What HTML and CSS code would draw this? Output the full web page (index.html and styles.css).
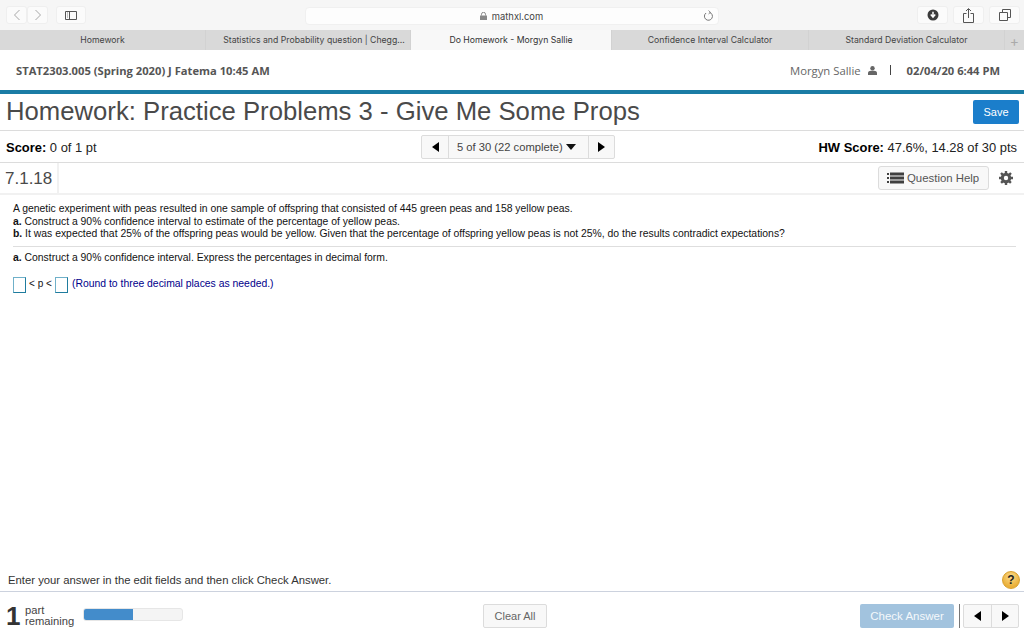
FILE: index.html
```html
<!DOCTYPE html>
<html lang="en">
<head>
<meta charset="utf-8">
<title>Do Homework - Morgyn Sallie</title>
<link rel="stylesheet" href="styles.css">
</head>
<body>
<div class="page">
  <div class="toolbar">
    <div class="tb-left">
      <div class="tb-group">
        <span class="tb-btn tb-nav"><svg width="8" height="12" viewBox="0 0 8 12"><path d="M6.500 1 1.500 6l5 5" fill="none" stroke="#a8a8a8"/></svg></span>
        <span class="tb-btn tb-nav"><svg width="8" height="12" viewBox="0 0 8 12"><path d="M1.500 1l5 5-5 5" fill="none" stroke="#a8a8a8"/></svg></span>
      </div>
      <span class="tb-btn tb-side"><svg width="12" height="9" viewBox="0 0 12 9"><path d="M.5.5h11v8H.5z" fill="none" stroke="#555"/><path d="M4.500.5v8" stroke="#555"/><path d="M2 2h1M2 4h1M2 6h1" stroke="#888"/></svg></span>
    </div>
    <div class="address">
      <span class="addr-spacer"></span>
      <span class="addr-text"><svg width="7" height="8" viewBox="0 0 7 8"><path d="M1.500 3.500V2.300a2 2 0 0 1 4 0v1.200" fill="none" stroke="#888"/><path d="M0 3.500h7V8H0z" fill="#888"/></svg>mathxl.com</span>
      <svg class="reload" width="11" height="12" viewBox="0 0 11 12"><path d="M6.500 2.400a4 4 0 1 1-3.400.6" fill="none" stroke="#777"/><path d="M5.500.5 7.500 2.400 5.500 4" fill="none" stroke="#777" stroke-width=".8"/></svg>
    </div>
    <div class="tb-right">
      <span class="tb-btn tb-action"><svg width="12" height="12" viewBox="0 0 12 12"><circle cx="6" cy="6" r="5.500" fill="#3c3c3c"/><path d="M6 2.800v4M3.800 5.600 6 8.200l2.200-2.600" fill="none" stroke="#fff" stroke-width="1.500"/></svg></span>
      <span class="tb-btn tb-action"><svg width="11" height="15" viewBox="0 0 11 15"><path d="M3.500 5.500H.5v9h10v-9h-3M5.500 10V1M3 3l2.500-2.500L8 3" fill="none" stroke="#555"/></svg></span>
      <span class="tb-btn tb-action"><svg width="12" height="12" viewBox="0 0 12 12"><path d="M.5 3.500h8v8h-8zM3.500 3.500v-3h8v8h-3" fill="none" stroke="#555"/></svg></span>
    </div>
  </div>
  <div class="tabs">
    <div class="tab t1">Homework</div>
    <div class="tab t2">Statistics and Probability question | Chegg...</div>
    <div class="tab t3 active">Do Homework - Morgyn Sallie</div>
    <div class="tab t4">Confidence Interval Calculator</div>
    <div class="tab t5">Standard Deviation Calculator</div>
    <div class="tab t6">+</div>
  </div>
  <header class="site-head">
    <div class="course">STAT2303.005 (Spring 2020) J Fatema 10:45 AM</div>
    <div class="user">
      <span class="user-name">Morgyn Sallie</span>
      <svg class="user-icon" width="9" height="9" viewBox="0 0 9 9"><circle cx="4.500" cy="2.300" r="2.200" fill="#666"/><path d="M0 9V6.800C0 5.500 1.500 5 3 4.800h3C7.500 5 9 5.500 9 6.800V9z" fill="#666"/></svg>
      <span class="user-sep"></span>
      <span class="user-date">02/04/20 6:44 PM</span>
    </div>
  </header>
  <div class="title-row">
    <h1 class="title">Homework: Practice Problems 3 - Give Me Some Props</h1>
    <button class="save">Save</button>
  </div>
  <div class="score-row">
    <div class="score"><b>Score:</b> 0 of 1 pt</div>
    <div class="pager">
      <span class="pg-btn"><i class="tri-l"></i></span>
      <span class="pg-mid">5 of 30 (22 complete)<i class="tri-d"></i></span>
      <span class="pg-btn"><i class="tri-r"></i></span>
    </div>
    <div class="hw"><b>HW Score:</b> 47.6%, 14.28 of 30 pts</div>
  </div>
  <div class="q-row">
    <div class="q-num">7.1.18</div>
    <div class="q-tools">
      <button class="help"><svg width="17" height="12" viewBox="0 0 17 12"><path d="M0 1h2v2H0zM0 5h2v2H0zM0 9h2v2H0zM3 .5h14v3H3zM3 4.500h14v3H3zM3 8.500h14v3H3z" fill="#3f3f3f"/></svg>Question Help</button>
      <svg class="gear" width="14" height="14" viewBox="0 0 14 14"><circle cx="7" cy="7" r="3.700" fill="none" stroke="#555" stroke-width="3"/><path d="M7 0v14M0 7h14M2 2l10 10M12 2 2 12" stroke="#555" stroke-width="2.400" stroke-dasharray="2.600 8.800 2.600"/></svg>
    </div>
  </div>
  <main class="question">
    <div class="stem">
      <p>A genetic experiment with peas resulted in one sample of offspring that consisted of 445 green peas and 158 yellow peas.</p>
      <p><b>a.</b> Construct a 90% confidence interval to estimate of the percentage of yellow peas.</p>
      <p><b>b.</b> It was expected that 25% of the offspring peas would be yellow. Given that the percentage of offspring yellow peas is not 25%, do the results contradict expectations?</p>
    </div>
    <p class="part"><b>a.</b> Construct a 90% confidence interval. Express the percentages in decimal form.</p>
    <div class="answer">
      <span class="field"></span><span class="lt">&lt; p &lt;</span><span class="field"></span><span class="hint">(Round to three decimal places as needed.)</span>
    </div>
  </main>
  <div class="instr">
    <span>Enter your answer in the edit fields and then click Check Answer.</span>
    <span class="qmark">?</span>
  </div>
  <footer class="foot">
    <div class="parts">
      <span class="big">1</span>
      <span class="part-txt">part<br>remaining</span>
      <span class="bar"><span class="bar-fill"></span></span>
    </div>
    <button class="clear">Clear All</button>
    <div class="foot-right">
      <button class="check">Check Answer</button>
      <span class="foot-sep"></span>
      <div class="pager small">
        <span class="pg-btn"><i class="tri-l"></i></span>
        <span class="pg-btn"><i class="tri-r"></i></span>
      </div>
    </div>
  </footer>
</div>
</body>
</html>
```
FILE: styles.css
```css
* { box-sizing: border-box; }
html, body { margin: 0; padding: 0; }
body { font-family: "Liberation Sans", Arial, sans-serif; background: #fff; color: #000; }
.page { width: 1024px; height: 640px; display: flex; flex-direction: column; overflow: hidden; }
p { margin: 0; }
button { font-family: inherit; cursor: default; }

.toolbar { height: 30px; background: #f6f6f6; display: flex; align-items: flex-start; padding-top: 6px; flex: none; }
.tb-left { width: 305px; display: flex; gap: 8px; padding-left: 6px; }
.tb-group { display: flex; }
.tb-btn { display: flex; align-items: center; justify-content: center; height: 18px; background: #fbfbfb; border: 1px solid #efefef; border-radius: 3px; }
.tb-nav { width: 21px; }
.tb-side { width: 30px; }
.address { width: 414px; height: 18px; margin-top: 1px; background: #fdfdfd; border: 1px solid #f0f0f0; border-radius: 4px; display: flex; align-items: center; justify-content: space-between; padding: 0 4px 0 0; font: 9.400px "Inter", "Noto Sans", sans-serif; color: #444; }
.addr-spacer { width: 14px; }
.addr-text { display: flex; align-items: center; gap: 5px; }
.tb-right { flex: 1; display: flex; gap: 5px; justify-content: flex-end; padding-right: 4px; }
.tb-action { width: 31px; }

.tabs { height: 20px; background: #d9d9d9; display: flex; flex: none; font: 8.700px "Inter", "Noto Sans", sans-serif; color: #444; }
.tab { display: flex; align-items: center; justify-content: center; border-right: 1px solid #d2d2d2; }
.t1 { width: 206px; }
.t2 { width: 205px; padding-left: 12px; }
.t3 { width: 201px; }
.t4 { width: 197px; }
.t5 { width: 196px; }
.t6 { flex: 1; font-size: 14px; color: #aaa; border-right: 0; }
.active { background: #f8f8f8; color: #333; }

.site-head { height: 44px; flex: none; border-bottom: 4px solid #1a7ca5; display: flex; align-items: center; justify-content: space-between; padding: 0 24px 0 16px; font-family: "Open Sans", sans-serif; color: #555; font-size: 11.200px; }
.course { font-weight: 700; }
.user { display: flex; align-items: center; }
.user-name { color: #666; font-size: 11.300px; }
.user-icon { margin-left: 7px; }
.user-sep { width: 1px; height: 10px; background: #444; margin: 0 16px 0 13px; }
.user-date { font-weight: 700; }

.title-row { height: 37px; flex: none; border-bottom: 1px solid #dcdcdc; display: flex; align-items: center; justify-content: space-between; padding: 0 5px 1px 6px; }
.title { margin: 0 0 2px; font-size: 25.700px; font-weight: 400; color: #4a4a4a; line-height: 34px; }
.save { width: 46px; height: 24px; border: 0; border-radius: 2px; background: #1b7ecb; color: #fff; font-size: 11px; padding: 0; }

.score-row { height: 32px; flex: none; border-bottom: 1px solid #dcdcdc; display: grid; grid-template-columns: 415px auto 1fr; align-items: center; padding: 0 7px 0 6px; font-size: 12.950px; color: #222; }
.score, .hw { padding-top: 1px; }
.score b, .hw b { color: #000; }
.hw { text-align: right; }
.pager { display: inline-flex; height: 24px; border: 1px solid #dcdcdc; border-radius: 2px; background: #f8f8f8; }
.pg-btn { width: 26px; display: flex; align-items: center; justify-content: center; }
.pg-btn + .pg-mid, .pg-mid + .pg-btn, .pg-btn + .pg-btn { border-left: 1px solid #dcdcdc; }
.pg-mid { display: flex; align-items: center; width: 140px; padding-left: 8px; font-size: 11.200px; color: #444; }
.tri-l { border: 5px solid transparent; border-left: 0; border-right: 7px solid #000; height: 0; }
.tri-r { border: 5px solid transparent; border-right: 0; border-left: 7px solid #000; height: 0; }
.tri-d { border: 5.500px solid transparent; border-bottom: 0; border-top: 6px solid #111; width: 0; margin-left: 3px; }

.q-row { height: 32px; flex: none; border-bottom: 2px solid #f1f1f1; display: flex; align-items: stretch; justify-content: space-between; padding-right: 11px; }
.q-num { width: 59px; border-right: 2px solid #f1f1f1; padding-left: 5px; font-size: 17px; line-height: 31px; color: #4a4a4a; }
.q-tools { display: flex; align-items: center; gap: 10px; }
.help { display: flex; align-items: center; gap: 3px; width: 111px; height: 24px; border: 1px solid #dcdcdc; border-radius: 3px; background: #f8f8f8; padding: 0 0 0 8px; font-size: 11.400px; color: #555; }

.question { flex: 1; padding: 8px 8px 0 13px; font-size: 10.400px; color: #111; line-height: 12.500px; }
.stem { padding-bottom: 5px; border-bottom: 1px solid #dedede; }
.part { margin-top: 5px; }
.answer { display: flex; align-items: center; margin-top: 11.500px; height: 18px; }
.field { width: 13px; height: 16px; border: 1px solid #1f7c9e; border-top-color: #6fb0c9; border-left-color: #6fb0c9; background: #fff; }
.lt { width: 29px; text-align: center; font-size: 10px; }
.hint { margin-left: 4px; color: #00008b; }

.instr { height: 27px; flex: none; border-bottom: 1px solid #ccd2de; display: flex; justify-content: space-between; align-items: center; padding: 3px 4px 0 8px; font-size: 11.300px; color: #333; }
.qmark { width: 18px; height: 18px; border-radius: 50%; background: radial-gradient(circle at 50% 30%, #fbdc8c, #eab03a 70%); border: 1px solid #d9a02c; font-weight: 700; font-size: 12px; color: #222; text-align: center; line-height: 16px; }

.foot { height: 48px; flex: none; display: grid; grid-template-columns: 477px auto 1fr; align-items: center; padding: 0 5px 0 6px; }
.parts { display: flex; align-items: center; }
.big { font-size: 26px; font-weight: 700; color: #333; width: 19px; line-height: 30px; }
.part-txt { width: 58px; font-size: 11.200px; line-height: 11px; color: #444; }
.bar { width: 100px; height: 13px; border: 1px solid #e6e6e6; border-radius: 3px; background: #f4f4f4; overflow: hidden; margin-top: -3px; }
.bar-fill { display: block; width: 50%; height: 100%; background: #438ccb; }
.clear { width: 64px; height: 24px; border: 1px solid #dcdcdc; border-radius: 2px; background: #f8f8f8; font-size: 11px; color: #666; padding: 0; }
.foot-right { display: flex; justify-content: flex-end; align-items: center; }
.check { width: 94px; height: 24px; border: 0; border-radius: 2px; background: #a2c3de; color: #f4f8fb; font-size: 11.500px; padding: 0; }
.foot-sep { width: 1px; height: 24px; background: #777; margin: 0 3px 0 5px; }
.small .pg-btn { width: 27px; }
```
